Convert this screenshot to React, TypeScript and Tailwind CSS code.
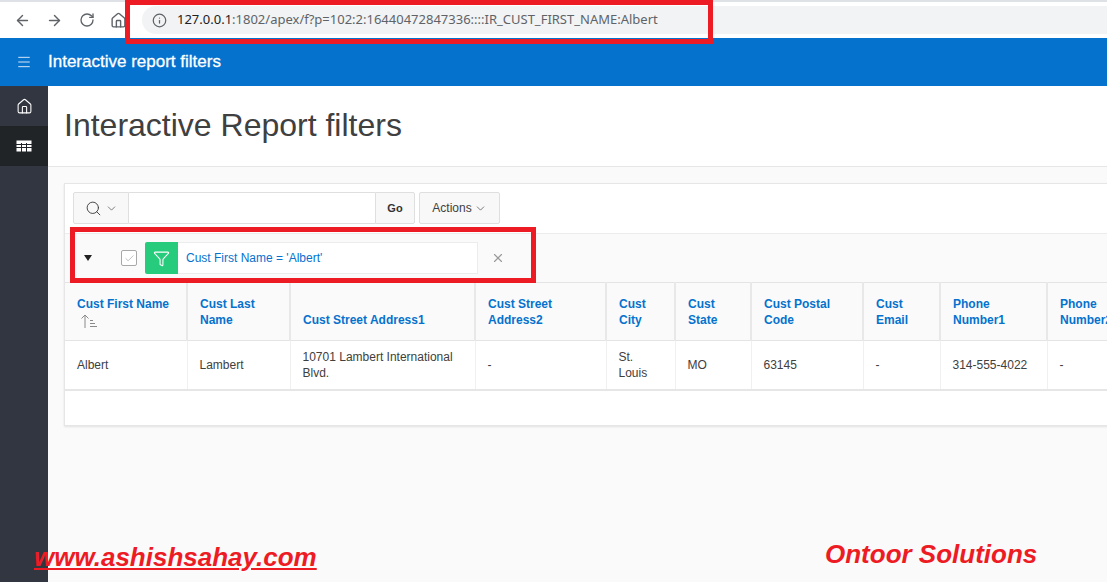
import { ArrowLeft, ArrowRight, RotateCw, House, Info, Search, ChevronDown, Check, X, Funnel, Menu } from 'lucide-react';

const COLS = [
  { w: 122, head: 'Cust First Name', cell: 'Albert', sort: true },
  { w: 103, head: 'Cust Last Name', cell: 'Lambert' },
  { w: 185, head: 'Cust Street Address1', cell: '10701 Lambert International Blvd.' },
  { w: 131, head: 'Cust Street Address2', cell: '-' },
  { w: 69, head: 'Cust City', cell: 'St. Louis' },
  { w: 76, head: 'Cust State', cell: 'MO' },
  { w: 112, head: 'Cust Postal Code', cell: '63145' },
  { w: 77, head: 'Cust Email', cell: '-' },
  { w: 107, head: 'Phone Number1', cell: '314-555-4022' },
  { w: 90, head: 'Phone Number2', cell: '-' },
];

function TableIcon() {
  return (
    <svg width="16" height="12" viewBox="0 0 16 12" fill="none">
      <rect x="0.5" y="0.5" width="15" height="11" fill="#fff" />
      <path d="M0 4.5H16M0 7.5H16M5.5 3V12M10.5 3V12" stroke="#212529" strokeWidth="1" />
    </svg>
  );
}

function SortIcon() {
  return (
    <svg width="18" height="14" viewBox="0 0 18 14" fill="none" stroke="#8a8a8a" strokeWidth="1">
      <path d="M5 14V1M1.5 4.5L5 1L8.5 4.5" />
      <path d="M10 6.5H13M10 9.5H15M10 12.5H17" />
    </svg>
  );
}

function BrowserBar() {
  return (
    <div className="flex h-[38px] items-center border-t-2 border-[#dee1e6] bg-white pl-[14px] text-[#5f6368]">
      <ArrowLeft size={17} strokeWidth={2} />
      <ArrowRight size={17} strokeWidth={2} className="ml-[15px]" />
      <RotateCw size={16} strokeWidth={2} className="ml-[16px]" />
      <House size={17} strokeWidth={2} className="ml-[15px]" />
      <div className="ml-[15px] flex h-[28px] flex-1 items-center rounded-l-full bg-[#f1f3f4] pl-[10px] font-['Noto_Sans',sans-serif] text-[13px]">
        <Info size={15} strokeWidth={2} />
        <span className="ml-[10px] whitespace-nowrap">
          <span className="text-[#202124]">127.0.0.1</span>
          :1802/apex/f?p=102:2:16440472847336::::IR_CUST_FIRST_NAME:Albert
        </span>
      </div>
    </div>
  );
}

function Toolbar() {
  return (
    <div className="flex h-[49px] items-start pl-[8px] pt-[8px]">
      <div className="flex h-[32px] items-center justify-center gap-[3px] w-[56px] rounded-l-[2px] border border-[#dfdfdf] bg-[#f8f8f8] text-[#444]">
        <Search size={17} strokeWidth={1.25} className="text-[#333]" />
        <ChevronDown size={13} strokeWidth={1.25} />
      </div>
      <div className="h-[32px] w-[246px] border-y border-[#dfdfdf] bg-white" />
      <div className="flex h-[32px] w-[40px] items-center justify-center rounded-r-[2px] border border-[#dfdfdf] bg-[#f8f8f8] text-[11px] font-bold text-[#333]">
        Go
      </div>
      <div className="ml-[4px] flex h-[32px] w-[81px] items-center justify-center gap-[2px] rounded-[2px] border border-[#dfdfdf] bg-[#f8f8f8] text-[12px] text-[#404040]">
        Actions
        <ChevronDown size={13} strokeWidth={1.25} />
      </div>
    </div>
  );
}

function FilterRow() {
  return (
    <div className="flex h-[49px] items-center border-t border-[#ececec] bg-[#fafafa] pl-[19px]">
      <span className="h-0 w-0 border-x-[4px] border-t-[6px] border-x-transparent border-t-[#222]" />
      <div className="ml-[29px] flex h-[16px] w-[16px] items-center justify-center rounded-[2px] border border-[#a8a8a8] bg-white text-[#777]">
        <Check size={11} strokeWidth={1} />
      </div>
      <div className="ml-[8px] flex h-[32px] w-[33px] items-center justify-center rounded-l-[2px] bg-[#27cb7c] text-white">
        <Funnel size={17} strokeWidth={1.5} />
      </div>
      <div className="flex h-[32px] w-[300px] items-center border border-l-0 border-[#ececec] bg-white pl-[8px] text-[12px] text-[#0572ce]">
        Cust First Name = 'Albert'
      </div>
      <X size={14} strokeWidth={2} className="ml-[13px] text-[#9a9a9a]" />
    </div>
  );
}

function ReportTable() {
  return (
    <table className="table-fixed border-collapse text-[12px] leading-[16px]">
      <colgroup>
        {COLS.map((c) => (
          <col key={c.head} style={{ width: c.w }} />
        ))}
      </colgroup>
      <thead>
        <tr className="h-[58px] border-y border-[#e4e4e4] bg-[#fafafa]">
          {COLS.map((c) => (
            <th
              key={c.head}
              className="border-r-2 border-[#e8e8e8] px-[12px] pb-[12px] pt-[11px] text-left align-bottom font-bold text-[#0572ce]"
            >
              {c.head}
              {c.sort && (
                <div className="h-[16px] pl-[3px] pt-[2px]">
                  <SortIcon />
                </div>
              )}
            </th>
          ))}
        </tr>
      </thead>
      <tbody>
        <tr className="h-[49px] border-b-2 border-[#e6e6e6] bg-white">
          {COLS.map((c) => (
            <td key={c.head} className="border-r border-[#f0f0f0] px-[12px] align-middle text-[#404040]">
              {c.cell}
            </td>
          ))}
        </tr>
      </tbody>
    </table>
  );
}

export default function App() {
  return (
    <div className="relative h-[582px] w-[1107px] overflow-hidden bg-[#fafafa] font-['Liberation_Sans',sans-serif]">
      <BrowserBar />
      <div className="flex h-[48px] items-center bg-[#0572ce] text-white">
        <Menu size={16} strokeWidth={1.25} className="ml-[16px]" />
        <span className="ml-[16px] text-[17px] [-webkit-text-stroke:0.3px_white]">Interactive report filters</span>
      </div>
      <div className="flex h-[496px]">
        <div className="w-[48px] shrink-0 bg-[#313640]">
          <div className="flex h-[40px] items-center justify-center text-white">
            <House size={17} strokeWidth={1.5} />
          </div>
          <div className="flex h-[40px] items-center justify-center bg-[#212427]">
            <TableIcon />
          </div>
        </div>
        <div className="min-w-0 flex-1">
          <div className="flex h-[81px] items-center border-b border-[#e6e6e6] bg-white pb-[2px] pl-[16px] text-[32px] text-[#404040]">
            Interactive Report filters
          </div>
          <div className="ml-[16px] mt-[16px] h-[243px] w-[1100px] overflow-hidden border border-[#e6e6e6] bg-white shadow-[0_1px_2px_rgba(0,0,0,0.1)]">
            <Toolbar />
            <FilterRow />
            <ReportTable />
          </div>
        </div>
      </div>

      <div className="absolute left-[125px] top-0 h-[44px] w-[588px] border-[5px] border-[#ed1c24]" />
      <div className="absolute left-[70px] top-[227px] h-[56px] w-[466px] border-[5px] border-[#ed1c24]" />
      <span className="absolute left-[34px] top-[542px] text-[26px] font-bold italic leading-[30px] text-[#ed1c24] underline">
        www.ashishsahay.com
      </span>
      <span className="absolute left-[825px] top-[539px] text-[26px] font-bold italic leading-[30px] text-[#ed1c24]">
        Ontoor Solutions
      </span>
    </div>
  );
}
